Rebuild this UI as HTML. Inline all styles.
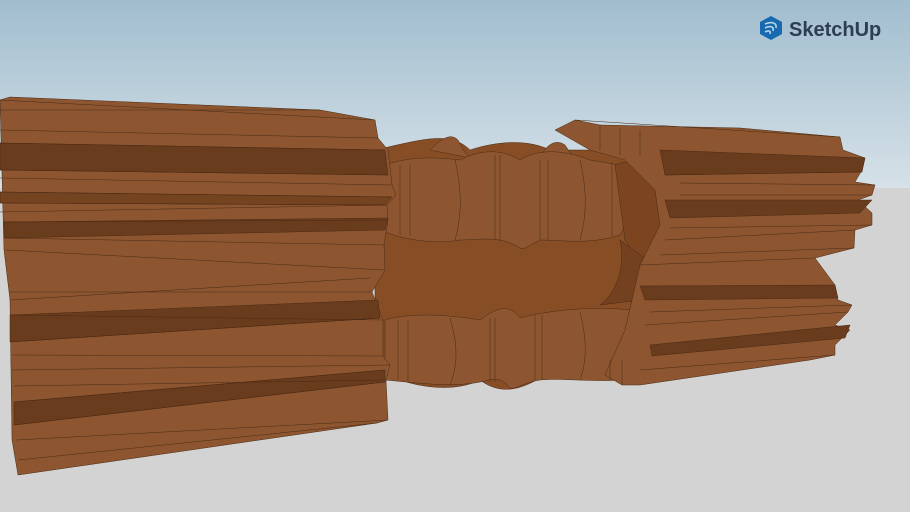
<!DOCTYPE html>
<html><head><meta charset="utf-8"><style>
html,body{margin:0;padding:0;width:910px;height:512px;overflow:hidden}
svg{display:block}
</style></head><body>
<svg width="910" height="512" viewBox="0 0 910 512" xmlns="http://www.w3.org/2000/svg">
<defs>
<linearGradient id="sky" x1="0" y1="0" x2="0" y2="1">
<stop offset="0" stop-color="#a1bdce"/><stop offset="1" stop-color="#d6e1e8"/>
</linearGradient>
</defs>
<rect width="910" height="188" fill="url(#sky)"/>
<rect y="188" width="910" height="324" fill="#d3d3d3"/>

<g stroke="#4a2a14" stroke-width="0.5" stroke-linejoin="round">
<path d="M375 150 C420 140 450 130 470 150 C500 140 530 140 550 150 L600 150 C630 150 660 170 665 210 L665 320 C660 360 630 380 600 380 L540 378 C520 390 500 395 480 380 C460 390 430 390 400 380 L375 380 Z" fill="#874e26"/>
<path d="M430 150 C440 140 450 132 458 140 C462 148 466 155 470 158 Z" fill="#8d5630"/>
<path d="M540 158 C545 146 555 138 565 145 L575 160 Z" fill="#8d5630"/>
<path d="M385 165 C400 160 420 155 460 160 C480 150 500 148 520 160 C535 150 560 148 590 160 L620 165 C630 180 630 220 620 235 C590 245 560 240 540 240 C530 245 525 250 520 248 C500 235 480 240 460 240 C430 245 400 238 385 232 Z" fill="#8d5630"/>
<path d="M400 165 L400 235 M410 165 L410 236 M455 160 C462 190 462 215 455 240 M495 155 L495 240 M500 155 L500 240 M540 160 L540 240 M548 160 L548 240 M580 160 C587 190 587 215 580 240 M612 163 L612 236" fill="none"/>
<path d="M385 320 C410 312 450 315 480 320 C500 305 510 305 520 318 C540 312 590 305 630 310 C640 330 640 360 625 380 C590 382 560 378 540 380 C525 382 515 390 510 388 C500 375 490 380 480 382 C450 388 410 382 385 380 Z" fill="#8d5630"/>
<path d="M398 320 L398 380 M408 320 L408 382 M450 318 C458 345 458 365 450 385 M490 318 L490 382 M495 318 L495 382 M535 315 L535 380 M542 315 L542 380 M580 312 C587 340 587 360 580 380" fill="none"/>
<path d="M615 165 C650 150 665 195 660 235 L640 262 L625 240 Z" fill="#7c4520"/>
<path d="M620 240 L650 262 L640 300 L600 305 C620 290 625 260 620 240 Z" fill="#734020"/>

<path d="M0 100 L10 97 L320 110 L375 120 L378 138 L388 150 L392 185 L396 195 L387 205 L388 220 L384 245 L385 270 L372 292 L383 320 L383 356 L390 365 L386 380 L388 420 L377 423 L18 475 L12 440 L10 300 L4 250 Z" fill="#8d5630"/>
<path d="M0 143 L385 150 L388 175 L0 170 Z" fill="#6a3c1e"/>
<path d="M0 192 L392 197 L385 205 L0 203 Z" fill="#74431f"/>
<path d="M4 222 L388 218 L385 230 L4 238 Z" fill="#6a3c1e"/>
<path d="M10 315 L378 300 L380 318 L10 342 Z" fill="#6a3c1e"/>
<path d="M14 402 L385 370 L385 382 L14 425 Z" fill="#6a3c1e"/>
<path d="M0 100 L375 120 M0 110 L320 110 M0 130 L378 138 M0 143 L385 150 M0 170 L388 175 M0 178 L392 185 M0 192 L392 197 M0 203 L385 205 M0 212 L387 205 M4 222 L388 220 M4 238 L384 245 M6 250 L385 270 M10 292 L372 292 M10 300 L370 278 M10 315 L383 320 M10 342 L380 318 M12 355 L383 356 M12 370 L390 365 M14 386 L386 380 M14 402 L385 370 M14 425 L385 382 M16 440 L388 420 M18 460 L377 423" fill="none"/>

<path d="M555 130 L575 120 L600 125 L740 128 L840 137 L843 150 L865 158 L862 170 L855 182 L875 185 L872 195 L858 200 L872 213 L872 225 L855 230 L854 248 L815 258 L835 285 L838 300 L852 305 L848 312 L835 325 L850 330 L835 345 L835 355 L810 360 L640 385 L622 385 L605 375 L625 330 L640 265 L660 225 L655 190 L625 160 L590 150 Z" fill="#8d5630"/>
<path d="M660 150 L865 158 L862 172 L665 175 Z" fill="#6a3c1e"/>
<path d="M665 200 L872 200 L860 213 L670 218 Z" fill="#6a3c1e"/>
<path d="M640 286 L835 285 L838 298 L645 300 Z" fill="#6a3c1e"/>
<path d="M650 345 L850 325 L845 338 L652 356 Z" fill="#6a3c1e"/>
<path d="M575 120 L840 137 M600 125 L600 150 M620 128 L620 155 M640 130 L640 155 M665 175 L862 172 M680 183 L875 185 M680 195 L872 195 M670 228 L872 225 M665 240 L855 230 M660 255 L854 248 M640 265 L815 258 M650 312 L852 305 M645 325 L848 312 M640 370 L835 355 M622 360 L622 385 M610 360 L610 380" fill="none"/>
</g>

<g transform="translate(760,16)">
<path d="M11 0 L22 6 L22 18 L11 24 L0 18 L0 6 Z" fill="#1769b0"/>
<path d="M5 8 C12 5 17 7 16 12 M5 12 C11 9 14 11 13 15 M5 16 C9 14 11 15 10 18" stroke="#b5d0e2" stroke-width="1.7" fill="none"/>
</g>
<text x="789" y="36" font-family="Liberation Sans, sans-serif" font-size="20" font-weight="bold" fill="#2c3e50">SketchUp</text>
</svg>
</body></html>
